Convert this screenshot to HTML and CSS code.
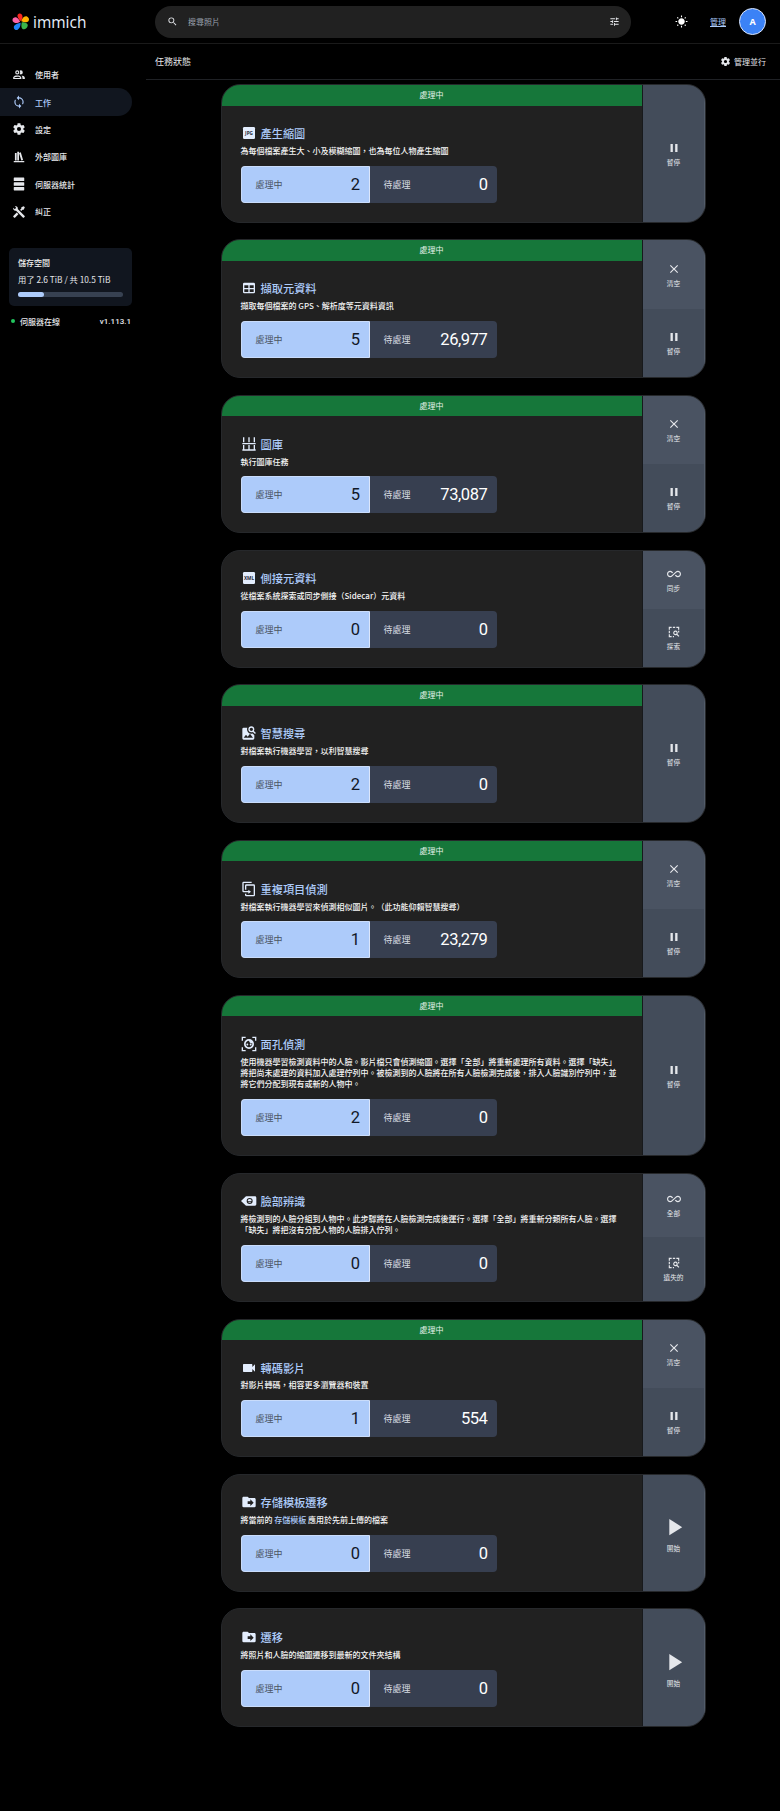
FILE: index.html
```html
<!DOCTYPE html>
<html lang="zh-Hant">
<head>
    <meta name="viewport" content="width=device-width, initial-scale=1">
    <title>任務狀態 - Immich</title>
    <link rel="stylesheet" href="styles.css">
</head>

<body>
    <svg class="sprite" aria-hidden="true">
        <symbol id="i-magnify" viewBox="0 0 24 24"><path d="M9.5,3A6.5,6.5 0 0,1 16,9.5C16,11.11 15.41,12.59 14.44,13.73L14.71,14H15.5L20.5,19L19,20.5L14,15.5V14.71L13.73,14.44C12.59,15.41 11.11,16 9.5,16A6.5,6.5 0 0,1 3,9.5A6.5,6.5 0 0,1 9.5,3M9.5,5C7,5 5,7 5,9.5C5,12 7,14 9.5,14C12,14 14,12 14,9.5C14,7 12,5 9.5,5Z"/></symbol>
        <symbol id="i-tune" viewBox="0 0 24 24"><path d="M3,17V19H9V17H3M3,5V7H13V5H3M13,21V19H21V17H13V15H11V21H13M7,9V11H3V13H7V15H9V9H7M21,13V11H11V13H21M15,9H17V7H21V5H17V3H15V9Z"/></symbol>
        <symbol id="i-sun" viewBox="0 0 24 24"><path d="M3.55 19.09L4.96 20.5L6.76 18.71L5.34 17.29M12 6C8.69 6 6 8.69 6 12S8.69 18 12 18 18 15.31 18 12C18 8.68 15.31 6 12 6M20 13H23V11H20M17.24 18.71L19.04 20.5L20.45 19.09L18.66 17.29M20.45 5L19.04 3.6L17.24 5.39L18.66 6.81M13 1H11V4H13M6.76 5.39L4.96 3.6L3.55 5L5.34 6.81L6.76 5.39M1 13H4V11H1M13 20H11V23H13"/></symbol>
        <symbol id="i-users" viewBox="0 0 24 24"><path d="M13.07 10.41A5 5 0 0 0 13.07 4.59A3.39 3.39 0 0 1 15 4A3.5 3.5 0 0 1 15 11A3.39 3.39 0 0 1 13.07 10.41M5.5 7.5A3.5 3.5 0 1 1 9 11A3.5 3.5 0 0 1 5.5 7.5M7.5 7.5A1.5 1.5 0 1 0 9 6A1.5 1.5 0 0 0 7.5 7.5M16 17V19H2V17S2 13 9 13 16 17 16 17M14 17C13.86 16.22 12.67 15 9 15S4.07 16.31 4 17M15.95 13A5.32 5.32 0 0 1 18 17V19H22V17S22 13.37 15.94 13Z"/></symbol>
        <symbol id="i-sync" viewBox="0 0 24 24"><path d="M12,18A6,6 0 0,1 6,12C6,11 6.25,10.03 6.7,9.2L5.24,7.74C4.46,8.97 4,10.43 4,12A8,8 0 0,0 12,20V23L16,19L12,15M12,4V1L8,5L12,9V6A6,6 0 0,1 18,12C18,13 17.75,13.97 17.3,14.8L18.76,16.26C19.54,15.03 20,13.57 20,12A8,8 0 0,0 12,4Z"/></symbol>
        <symbol id="i-cog" viewBox="0 0 24 24"><path d="M12,15.5A3.5,3.5 0 0,1 8.5,12A3.5,3.5 0 0,1 12,8.5A3.5,3.5 0 0,1 15.5,12A3.5,3.5 0 0,1 12,15.5M19.43,12.97C19.47,12.65 19.5,12.33 19.5,12C19.5,11.67 19.47,11.34 19.43,11L21.54,9.37C21.73,9.22 21.78,8.95 21.66,8.73L19.66,5.27C19.54,5.05 19.27,4.96 19.05,5.05L16.56,6.05C16.04,5.66 15.5,5.32 14.87,5.07L14.5,2.42C14.46,2.18 14.25,2 14,2H10C9.75,2 9.54,2.18 9.5,2.42L9.13,5.07C8.5,5.32 7.96,5.66 7.44,6.05L4.95,5.05C4.73,4.96 4.46,5.05 4.34,5.27L2.34,8.73C2.21,8.95 2.27,9.22 2.46,9.37L4.57,11C4.53,11.34 4.5,11.67 4.5,12C4.5,12.33 4.53,12.65 4.57,12.97L2.46,14.63C2.27,14.78 2.21,15.05 2.34,15.27L4.34,18.73C4.46,18.95 4.73,19.03 4.95,18.95L7.44,17.94C7.96,18.34 8.5,18.68 9.13,18.93L9.5,21.58C9.54,21.82 9.75,22 10,22H14C14.25,22 14.46,21.82 14.5,21.58L14.87,18.93C15.5,18.67 16.04,18.34 16.56,17.94L19.05,18.95C19.27,19.03 19.54,18.95 19.66,18.73L21.66,15.27C21.78,15.05 21.73,14.78 21.54,14.63L19.43,12.97Z"/></symbol>
        <symbol id="i-bookshelf" viewBox="0 0 24 24"><path d="M9 3V18H12V3H9M12 5L16 18L19 17L15 4L12 5M5 5V18H8V5H5M3 19V21H21V19H3Z"/></symbol>
        <symbol id="i-server" viewBox="0 0 24 24"><path d="M4,1H20A1,1 0 0,1 21,2V6A1,1 0 0,1 20,7H4A1,1 0 0,1 3,6V2A1,1 0 0,1 4,1M4,9H20A1,1 0 0,1 21,10V14A1,1 0 0,1 20,15H4A1,1 0 0,1 3,14V10A1,1 0 0,1 4,9M4,17H20A1,1 0 0,1 21,18V22A1,1 0 0,1 20,23H4A1,1 0 0,1 3,22V18A1,1 0 0,1 4,17Z"/></symbol>
        <symbol id="i-tools" viewBox="0 0 24 24"><path d="M21.71 20.29L20.29 21.71A1 1 0 0 1 18.88 21.71L7 9.85A3.81 3.81 0 0 1 6 10A4 4 0 0 1 2.22 4.7L4.76 7.24L5.29 6.71L6.71 5.29L7.24 4.76L4.7 2.22A4 4 0 0 1 10 6A3.81 3.81 0 0 1 9.85 7L21.71 18.88A1 1 0 0 1 21.71 20.29M2.29 18.88A1 1 0 0 0 2.29 20.29L3.71 21.71A1 1 0 0 0 5.12 21.71L11 15.83L8.17 13M20 2L16 4V6L13.83 8.17L15.83 10.17L18 8H20L22 4Z"/></symbol>
        <symbol id="i-table" viewBox="0 0 24 24"><path d="M5,4H19A2,2 0 0,1 21,6V18A2,2 0 0,1 19,20H5A2,2 0 0,1 3,18V6A2,2 0 0,1 5,4M5,8V12H11V8H5M13,8V12H19V8H13M5,14V18H11V14H5M13,14V18H19V14H13Z"/></symbol>
        <symbol id="i-shelves" viewBox="0 0 24 24"><path d="M3 2H5V9.5H3ZM11 2H13V9.5H11ZM19 2H21V9.5H19ZM2 10.5H22V12.5H2ZM3 13.5H5V20H3ZM11 13.5H13V20H11ZM19 13.5H21V20H19ZM2 20H22V22H2Z"/></symbol>
        <symbol id="i-image-search" viewBox="0 0 24 24"><path d="M15.5,2C18,2 20,4 20,6.5C20,7.38 19.75,8.2 19.31,8.89L22.39,12L21,13.39L17.88,10.32C17.19,10.75 16.37,11 15.5,11C13,11 11,9 11,6.5C11,4 13,2 15.5,2M15.5,4A2.5,2.5 0 0,0 13,6.5A2.5,2.5 0 0,0 15.5,9A2.5,2.5 0 0,0 18,6.5A2.5,2.5 0 0,0 15.5,4M7.5,14.5L4,19H18L13.5,13L10,17.5L7.5,14.5M20,20A2,2 0 0,1 18,22H4A2,2 0 0,1 2,20V6A2,2 0 0,1 4,4H9.5C9.18,4.77 9,5.61 9,6.5A6.5,6.5 0 0,0 15.5,13C16.18,13 16.84,12.89 17.46,12.7L20,15.24V20Z"/></symbol>
        <symbol id="i-duplicate" viewBox="0 0 24 24"><path d="M11,17H4A2,2 0 0,1 2,15V3A2,2 0 0,1 4,1H16V3H4V15H11V13L15,16L11,19V17M19,21V7H8V13H6V7A2,2 0 0,1 8,5H19A2,2 0 0,1 21,7V21A2,2 0 0,1 19,23H8A2,2 0 0,1 6,21V19H8V21H19Z"/></symbol>
        <symbol id="i-face" viewBox="0 0 24 24"><path d="M1 1H7V3H3V7H1ZM17 1H23V7H21V3H17ZM1 17H3V21H7V23H1ZM21 17H23V23H17V21H21ZM12 4.5A7.5 7.5 0 1 1 12 19.5A7.5 7.5 0 0 1 12 4.5M12 7C9.2 7 7 9.2 7 12S9.2 17 12 17 17 14.8 17 12A3 3 0 0 0 16.8 11C14.2 11 12.7 9.7 12 7M9.5 11.3A1.4 1.4 0 1 1 9.5 14.1A1.4 1.4 0 0 1 9.5 11.3M14.5 11.3A1.4 1.4 0 1 1 14.5 14.1A1.4 1.4 0 0 1 14.5 11.3Z"/></symbol>
        <symbol id="i-tag-face" viewBox="0 0 24 24"><path d="M21 5H8C7.3 5 6.7 5.3 6.3 5.9L0 12L6.3 18.1C6.7 18.7 7.3 19 8 19H21A2 2 0 0 0 23 17V7A2 2 0 0 0 21 5M13 7.5A4.5 4.5 0 1 1 13 16.5A4.5 4.5 0 0 1 13 7.5M13 9A3 3 0 0 0 10 12H16A3 3 0 0 0 13 9M10.3 13A3 3 0 0 0 15.7 13Z"/></symbol>
        <symbol id="i-video" viewBox="0 0 24 24"><path d="M17,10.5V7A1,1 0 0,0 16,6H4A1,1 0 0,0 3,7V17A1,1 0 0,0 4,18H16A1,1 0 0,0 17,17V13.5L21,17.5V6.5L17,10.5Z"/></symbol>
        <symbol id="i-folder-move" viewBox="0 0 24 24"><path d="M14,18V15H10V11H14V8L19,13M20,6H12L10,4H4C2.89,4 2,4.89 2,6V18A2,2 0 0,0 4,20H20A2,2 0 0,0 22,18V8C22,6.89 21.1,6 20,6Z"/></symbol>
        <symbol id="i-close" viewBox="0 0 24 24"><path d="M19,6.41L17.59,5L12,10.59L6.41,5L5,6.41L10.59,12L5,17.59L6.41,19L12,13.41L17.59,19L19,17.59L13.41,12L19,6.41Z"/></symbol>
        <symbol id="i-pause" viewBox="0 0 24 24"><path d="M14,19H18V5H14M6,19H10V5H6V19Z"/></symbol>
        <symbol id="i-all" viewBox="0 0 24 24"><path d="M18.6,6.62C17.16,6.62 15.8,7.18 14.83,8.15L7.8,14.39C7.16,15.03 6.31,15.38 5.4,15.38C3.53,15.38 2,13.87 2,12C2,10.13 3.53,8.62 5.4,8.62C6.31,8.62 7.16,8.97 7.84,9.65L8.97,10.65L10.5,9.31L9.22,8.2C8.2,7.18 6.84,6.62 5.4,6.62C2.42,6.62 0,9.04 0,12C0,14.96 2.42,17.38 5.4,17.38C6.84,17.38 8.2,16.82 9.17,15.85L16.2,9.61C16.84,8.97 17.69,8.62 18.6,8.62C20.47,8.62 22,10.13 22,12C22,13.87 20.47,15.38 18.6,15.38C17.7,15.38 16.84,15.03 16.16,14.35L15,13.34L13.5,14.68L14.78,15.8C15.8,16.81 17.15,17.37 18.6,17.37C21.58,17.37 24,14.96 24,11.99C24,9 21.58,6.62 18.6,6.62Z"/></symbol>
        <symbol id="i-select-search" viewBox="0 0 24 24"><path d="M3 3H8V5H5V8H3ZM10 3H14V5H10ZM16 3H21V8H19V5H16ZM3 10H5V14H3ZM19 10H21V13H19ZM3 16H5V19H8V21H3ZM10 19H12V21H10ZM14.5 9.5A4 4 0 0 1 17.9 15.6L21.2 18.9L19.8 20.3L16.5 17A4 4 0 1 1 14.5 9.5M14.5 11.5A2 2 0 1 0 14.5 15.5A2 2 0 0 0 14.5 11.5Z"/></symbol>
        <symbol id="i-play" viewBox="0 0 24 24"><path d="M8,5.14V19.14L19,12.14L8,5.14Z"/></symbol>
    </svg>

    <header class="topbar">
        <div class="brand">
            <svg class="brand-mark" viewBox="0 0 24 24">
                <path d="M12 11C9 9 5 3 9 1C12 0 14 3 14 5C14 7 13 9 12 11Z" fill="#fa2921"/>
                <path d="M12.5 11C13 8 16 3 20 4.5C24 6.5 23 11 20 12C18 12.6 15 12 12.5 11Z" fill="#ffb400"/>
                <path d="M13 12.5C16 12 21 13 21 17C20 21.5 15.5 23 13.5 20.5C12 18.5 12.5 15 13 12.5Z" fill="#3ab54a"/>
                <path d="M11.5 13C11.5 16 10.5 21 7 22.5C3 23.5 1.5 19.5 3 17C4.5 15 8.5 13.5 11.5 13Z" fill="#1e83f7"/>
                <path d="M10.8 11.6C8 13.5 3 14.5 1 11C-0.5 7.5 3 5 6 6C8 6.8 10 9.5 10.8 11.6Z" fill="#fa64a8"/>
            </svg>
            <span class="brand-name">immich</span>
        </div>
        <div class="search">
            <svg class="icon search-icon"><use href="#i-magnify"/></svg>
            <span class="search-text">搜尋照片</span>
            <svg class="icon tune-icon"><use href="#i-tune"/></svg>
        </div>
        <div class="topbar-right">
            <svg class="icon sun-icon"><use href="#i-sun"/></svg>
            <a class="admin-link" href="#">管理</a>
            <div class="avatar">A</div>
        </div>
    </header>

    <div class="layout">
        <aside class="sidebar">
            <nav class="nav">
                <a class="nav-item"><svg class="icon"><use href="#i-users"/></svg>使用者</a>
                <a class="nav-item active"><svg class="icon"><use href="#i-sync"/></svg>工作</a>
                <a class="nav-item"><svg class="icon"><use href="#i-cog"/></svg>設定</a>
                <a class="nav-item"><svg class="icon"><use href="#i-bookshelf"/></svg>外部圖庫</a>
                <a class="nav-item"><svg class="icon"><use href="#i-server"/></svg>伺服器統計</a>
                <a class="nav-item"><svg class="icon"><use href="#i-tools"/></svg>糾正</a>
            </nav>
            <div class="storage">
                <p class="storage-title">儲存空間</p>
                <p class="storage-used">用了 2.6 TiB / 共 10.5 TiB</p>
                <div class="storage-bar"><div class="storage-fill"></div></div>
            </div>
            <div class="server-status">
                <span class="dot"></span>
                <span class="online">伺服器在線</span>
                <span class="version">v1.113.1</span>
            </div>
        </aside>

        <main class="content">
            <div class="subheader">
                <span class="subheader-title">任務狀態</span>
                <span class="subheader-action"><svg class="icon"><use href="#i-cog"/></svg>管理並行</span>
            </div>

            <div class="jobs">
                <section class="job">
                    <div class="job-main">
                        <div class="job-active">處理中</div>
                        <div class="job-body">
                            <h3 class="job-title"><svg class="job-icon" viewBox="0 0 24 24"><rect x="3" y="3" width="18" height="18" rx="2"/><text class="icon-text" x="12" y="15">JPG</text></svg>產生縮圖</h3>
                            <p class="job-desc">為每個檔案產生大、小及模糊縮圖，也為每位人物產生縮圖</p>
                            <div class="stats">
                                <div class="stat stat-active"><span>處理中</span><b>2</b></div>
                                <div class="stat stat-waiting"><span>待處理</span><b>0</b></div>
                            </div>
                        </div>
                    </div>
                    <div class="job-actions">
                        <button class="action"><svg class="icon"><use href="#i-pause"/></svg>暫停</button>
                    </div>
                </section>

                <section class="job">
                    <div class="job-main">
                        <div class="job-active">處理中</div>
                        <div class="job-body">
                            <h3 class="job-title"><svg class="job-icon"><use href="#i-table"/></svg>擷取元資料</h3>
                            <p class="job-desc">擷取每個檔案的 GPS、解析度等元資料資訊</p>
                            <div class="stats">
                                <div class="stat stat-active"><span>處理中</span><b>5</b></div>
                                <div class="stat stat-waiting"><span>待處理</span><b>26,977</b></div>
                            </div>
                        </div>
                    </div>
                    <div class="job-actions">
                        <button class="action"><svg class="icon"><use href="#i-close"/></svg>清空</button>
                        <button class="action"><svg class="icon"><use href="#i-pause"/></svg>暫停</button>
                    </div>
                </section>

                <section class="job">
                    <div class="job-main">
                        <div class="job-active">處理中</div>
                        <div class="job-body">
                            <h3 class="job-title"><svg class="job-icon"><use href="#i-shelves"/></svg>圖庫</h3>
                            <p class="job-desc">執行圖庫任務</p>
                            <div class="stats">
                                <div class="stat stat-active"><span>處理中</span><b>5</b></div>
                                <div class="stat stat-waiting"><span>待處理</span><b>73,087</b></div>
                            </div>
                        </div>
                    </div>
                    <div class="job-actions">
                        <button class="action"><svg class="icon"><use href="#i-close"/></svg>清空</button>
                        <button class="action"><svg class="icon"><use href="#i-pause"/></svg>暫停</button>
                    </div>
                </section>

                <section class="job">
                    <div class="job-main">
                        <div class="job-body">
                            <h3 class="job-title"><svg class="job-icon" viewBox="0 0 24 24"><rect x="3" y="3" width="18" height="18" rx="2"/><text class="icon-text" x="12" y="15">XML</text></svg>側接元資料</h3>
                            <p class="job-desc">從檔案系統探索或同步側接（Sidecar）元資料</p>
                            <div class="stats">
                                <div class="stat stat-active"><span>處理中</span><b>0</b></div>
                                <div class="stat stat-waiting"><span>待處理</span><b>0</b></div>
                            </div>
                        </div>
                    </div>
                    <div class="job-actions">
                        <button class="action"><svg class="icon"><use href="#i-all"/></svg>同步</button>
                        <button class="action"><svg class="icon"><use href="#i-select-search"/></svg>探索</button>
                    </div>
                </section>

                <section class="job">
                    <div class="job-main">
                        <div class="job-active">處理中</div>
                        <div class="job-body">
                            <h3 class="job-title"><svg class="job-icon"><use href="#i-image-search"/></svg>智慧搜尋</h3>
                            <p class="job-desc">對檔案執行機器學習，以利智慧搜尋</p>
                            <div class="stats">
                                <div class="stat stat-active"><span>處理中</span><b>2</b></div>
                                <div class="stat stat-waiting"><span>待處理</span><b>0</b></div>
                            </div>
                        </div>
                    </div>
                    <div class="job-actions">
                        <button class="action"><svg class="icon"><use href="#i-pause"/></svg>暫停</button>
                    </div>
                </section>

                <section class="job">
                    <div class="job-main">
                        <div class="job-active">處理中</div>
                        <div class="job-body">
                            <h3 class="job-title"><svg class="job-icon"><use href="#i-duplicate"/></svg>重複項目偵測</h3>
                            <p class="job-desc">對檔案執行機器學習來偵測相似圖片。（此功能仰賴智慧搜尋）</p>
                            <div class="stats">
                                <div class="stat stat-active"><span>處理中</span><b>1</b></div>
                                <div class="stat stat-waiting"><span>待處理</span><b>23,279</b></div>
                            </div>
                        </div>
                    </div>
                    <div class="job-actions">
                        <button class="action"><svg class="icon"><use href="#i-close"/></svg>清空</button>
                        <button class="action"><svg class="icon"><use href="#i-pause"/></svg>暫停</button>
                    </div>
                </section>

                <section class="job">
                    <div class="job-main">
                        <div class="job-active">處理中</div>
                        <div class="job-body">
                            <h3 class="job-title"><svg class="job-icon"><use href="#i-face"/></svg>面孔偵測</h3>
                            <p class="job-desc">使用機器學習檢測資料中的人臉。影片檔只會偵測縮圖。選擇「全部」將重新處理所有資料。選擇「缺失」將把尚未處理的資料加入處理佇列中。被檢測到的人臉將在所有人臉檢測完成後，排入人臉識別佇列中，並將它們分配到現有或新的人物中。</p>
                            <div class="stats">
                                <div class="stat stat-active"><span>處理中</span><b>2</b></div>
                                <div class="stat stat-waiting"><span>待處理</span><b>0</b></div>
                            </div>
                        </div>
                    </div>
                    <div class="job-actions">
                        <button class="action"><svg class="icon"><use href="#i-pause"/></svg>暫停</button>
                    </div>
                </section>

                <section class="job">
                    <div class="job-main">
                        <div class="job-body">
                            <h3 class="job-title"><svg class="job-icon"><use href="#i-tag-face"/></svg>臉部辨識</h3>
                            <p class="job-desc">將檢測到的人臉分組到人物中。此步驟將在人臉檢測完成後運行。選擇「全部」將重新分類所有人臉。選擇「缺失」將把沒有分配人物的人臉排入佇列。</p>
                            <div class="stats">
                                <div class="stat stat-active"><span>處理中</span><b>0</b></div>
                                <div class="stat stat-waiting"><span>待處理</span><b>0</b></div>
                            </div>
                        </div>
                    </div>
                    <div class="job-actions">
                        <button class="action"><svg class="icon"><use href="#i-all"/></svg>全部</button>
                        <button class="action"><svg class="icon"><use href="#i-select-search"/></svg>遺失的</button>
                    </div>
                </section>

                <section class="job">
                    <div class="job-main">
                        <div class="job-active">處理中</div>
                        <div class="job-body">
                            <h3 class="job-title"><svg class="job-icon"><use href="#i-video"/></svg>轉碼影片</h3>
                            <p class="job-desc">對影片轉碼，相容更多瀏覽器和裝置</p>
                            <div class="stats">
                                <div class="stat stat-active"><span>處理中</span><b>1</b></div>
                                <div class="stat stat-waiting"><span>待處理</span><b>554</b></div>
                            </div>
                        </div>
                    </div>
                    <div class="job-actions">
                        <button class="action"><svg class="icon"><use href="#i-close"/></svg>清空</button>
                        <button class="action"><svg class="icon"><use href="#i-pause"/></svg>暫停</button>
                    </div>
                </section>

                <section class="job">
                    <div class="job-main">
                        <div class="job-body">
                            <h3 class="job-title"><svg class="job-icon"><use href="#i-folder-move"/></svg>存儲模板遷移</h3>
                            <p class="job-desc">將當前的 <a class="desc-link" href="#">存儲模板</a> 應用於先前上傳的檔案</p>
                            <div class="stats">
                                <div class="stat stat-active"><span>處理中</span><b>0</b></div>
                                <div class="stat stat-waiting"><span>待處理</span><b>0</b></div>
                            </div>
                        </div>
                    </div>
                    <div class="job-actions">
                        <button class="action action-start"><svg class="icon"><use href="#i-play"/></svg>開始</button>
                    </div>
                </section>

                <section class="job">
                    <div class="job-main">
                        <div class="job-body">
                            <h3 class="job-title"><svg class="job-icon"><use href="#i-folder-move"/></svg>遷移</h3>
                            <p class="job-desc">將照片和人臉的縮圖遷移到最新的文件夾結構</p>
                            <div class="stats">
                                <div class="stat stat-active"><span>處理中</span><b>0</b></div>
                                <div class="stat stat-waiting"><span>待處理</span><b>0</b></div>
                            </div>
                        </div>
                    </div>
                    <div class="job-actions">
                        <button class="action action-start"><svg class="icon"><use href="#i-play"/></svg>開始</button>
                    </div>
                </section>
            </div>
        </main>
    </div>
</body>

</html>
```

FILE: styles.css
```css
* {
    box-sizing: border-box;
}

body {
    margin: 0;
    min-height: 1811px;
    background-color: #000;
    color: #e5e7eb;
    font-family: "Noto Sans CJK TC", "Noto Sans", sans-serif;
    font-size: 8px;
}

p,
h3 {
    margin: 0;
}

.sprite {
    display: none;
}

.icon {
    display: block;
    flex: none;
    width: 14px;
    height: 14px;
    fill: currentColor;
}

/* top bar */
.topbar {
    display: flex;
    align-items: center;
    height: 44px;
    border-bottom: 1px solid #1a1a1a;
}

.brand {
    display: flex;
    align-items: center;
    gap: 3px;
    width: 155px;
    padding-left: 12px;
}

.brand-mark {
    width: 18px;
    height: 18px;
}

.brand-name {
    color: #e8f0fd;
    font-family: "Open Sans", sans-serif;
    font-size: 15.5px;
    line-height: 20px;
}

.search {
    display: flex;
    align-items: center;
    width: 476px;
    height: 32px;
    padding: 0 11px 0 12px;
    background-color: #212121;
    border-radius: 16px;
}

.search-icon {
    width: 11px;
    height: 11px;
}

.search-text {
    flex: 1;
    margin-left: 10px;
    color: #9ca3af;
}

.tune-icon {
    width: 11px;
    height: 11px;
}

.topbar-right {
    display: flex;
    align-items: center;
    flex: 1;
    padding-left: 44px;
}

.sun-icon {
    width: 13px;
    height: 13px;
    color: #fff;
}

.admin-link {
    margin-left: 22px;
    color: #adcbfa;
    text-decoration: underline;
}

.avatar {
    display: flex;
    align-items: center;
    justify-content: center;
    width: 27px;
    height: 27px;
    margin-left: 13px;
    background-color: #3b82f6;
    border: 1px solid #dbe6fb;
    border-radius: 50%;
    color: #fff;
    font-family: "Noto Sans", sans-serif;
    font-size: 9px;
    font-weight: 700;
}

/* page layout */
.layout {
    display: grid;
    grid-template-columns: 146px 1fr;
}

.sidebar {
    padding-top: 17px;
}

.nav-item {
    display: flex;
    align-items: center;
    gap: 9px;
    height: 27.4px;
    width: 132px;
    padding-left: 12px;
    border-radius: 0 14px 14px 0;
    color: #e5e7eb;
    font-weight: 500;
}

.nav-item.active {
    background-color: #11161f;
    color: #adcbfa;
}

.storage {
    width: 123px;
    height: 58px;
    margin: 23px 0 0 9px;
    padding: 9px 9px 0;
    background-color: #11161f;
    border-radius: 5px;
}

.storage-title {
    color: #f0f0f0;
    font-weight: 500;
    line-height: 12px;
}

.storage-used {
    margin-top: 4px;
    color: #e5e7eb;
    font-size: 8.3px;
    line-height: 12px;
}

.storage-bar {
    height: 5px;
    margin-top: 7px;
    background-color: #374151;
    border-radius: 3px;
}

.storage-fill {
    width: 25%;
    height: 100%;
    background-color: #adcbfa;
    border-radius: 3px;
}

.server-status {
    display: flex;
    align-items: center;
    height: 16px;
    width: 131px;
    margin-top: 7px;
    padding-left: 11px;
}

.dot {
    width: 4px;
    height: 4px;
    margin-right: 5px;
    background-color: #22c55e;
    border-radius: 50%;
}

.online {
    flex: 1;
    font-weight: 500;
}

.version {
    font-family: "Roboto", sans-serif;
    font-size: 8px;
    font-weight: 500;
}

/* content header */
.subheader {
    display: flex;
    align-items: center;
    justify-content: space-between;
    height: 36px;
    padding: 0 14px 0 9px;
    border-bottom: 1px solid #1f2125;
}

.subheader-title {
    font-size: 9px;
}

.subheader-action {
    display: flex;
    align-items: center;
    gap: 3px;
}

.subheader-action .icon {
    width: 11px;
    height: 11px;
}

/* job cards */
.jobs {
    display: flex;
    flex-direction: column;
    gap: 16.4px;
    width: 485px;
    margin: 4.3px auto 0;
}

.job {
    display: flex;
    overflow: hidden;
    background-color: #212121;
    border: 1px solid #26282b;
    border-radius: 19px;
}

.job-main {
    flex: 1;
    min-width: 0;
}

.job-active {
    height: 20.5px;
    background-color: #16773a;
    color: #e5f3ea;
    line-height: 20px;
    text-align: center;
}

.job-body {
    padding: 19px 19px 19px 19px;
}

.job-title {
    display: flex;
    align-items: center;
    gap: 4px;
    height: 17px;
    color: #adcbfa;
    font-size: 11.2px;
    font-weight: 500;
}

.job-icon {
    flex: none;
    width: 16px;
    height: 16px;
    fill: #e3edfd;
}

.icon-text {
    fill: #1f2937;
    font-family: "Noto Sans", sans-serif;
    font-size: 7px;
    font-weight: 700;
    text-anchor: middle;
}

.job-desc {
    margin-top: 3.4px;
    color: #f5f5f5;
    font-weight: 500;
    line-height: 11.3px;
}

.desc-link {
    color: #adcbfa;
    text-decoration: none;
}

.stats {
    display: flex;
    width: 256px;
    height: 37px;
    margin-top: 9.6px;
}

.stat {
    display: flex;
    flex: 1;
    align-items: center;
    justify-content: space-between;
    padding: 0 9px 0 14px;
    font-size: 9px;
}

.stat b {
    font-family: "Roboto", sans-serif;
    font-size: 16.5px;
    font-weight: 400;
    letter-spacing: -0.4px;
}

.stat-active {
    background-color: #adcbfa;
    border: 1px solid #c9dcfb;
    border-right-color: #dbe6fb;
    border-radius: 4px 0 0 4px;
    color: #4b5563;
}

.stat-active b {
    color: #111827;
}

.stat-waiting {
    background-color: #373f50;
    border-radius: 0 4px 4px 0;
    color: #d9dde3;
}

.stat-waiting b {
    color: #fff;
}

.job-actions {
    display: flex;
    flex: none;
    flex-direction: column;
    width: 63px;
    border-left: 1px solid #17191c;
}

.action {
    display: flex;
    flex: 1;
    flex-direction: column;
    align-items: center;
    justify-content: center;
    gap: 3px;
    padding: 0;
    background-color: #4a5362;
    border: 0;
    box-shadow: inset -1px 0 0 #525c6a;
    color: #e5e7eb;
    font-family: inherit;
    font-size: 6.67px;
    line-height: 9px;
}

.action:only-child,
.action + .action {
    background-color: #434c5a;
}

.action-start .icon {
    width: 28px;
    height: 28px;
}
```
